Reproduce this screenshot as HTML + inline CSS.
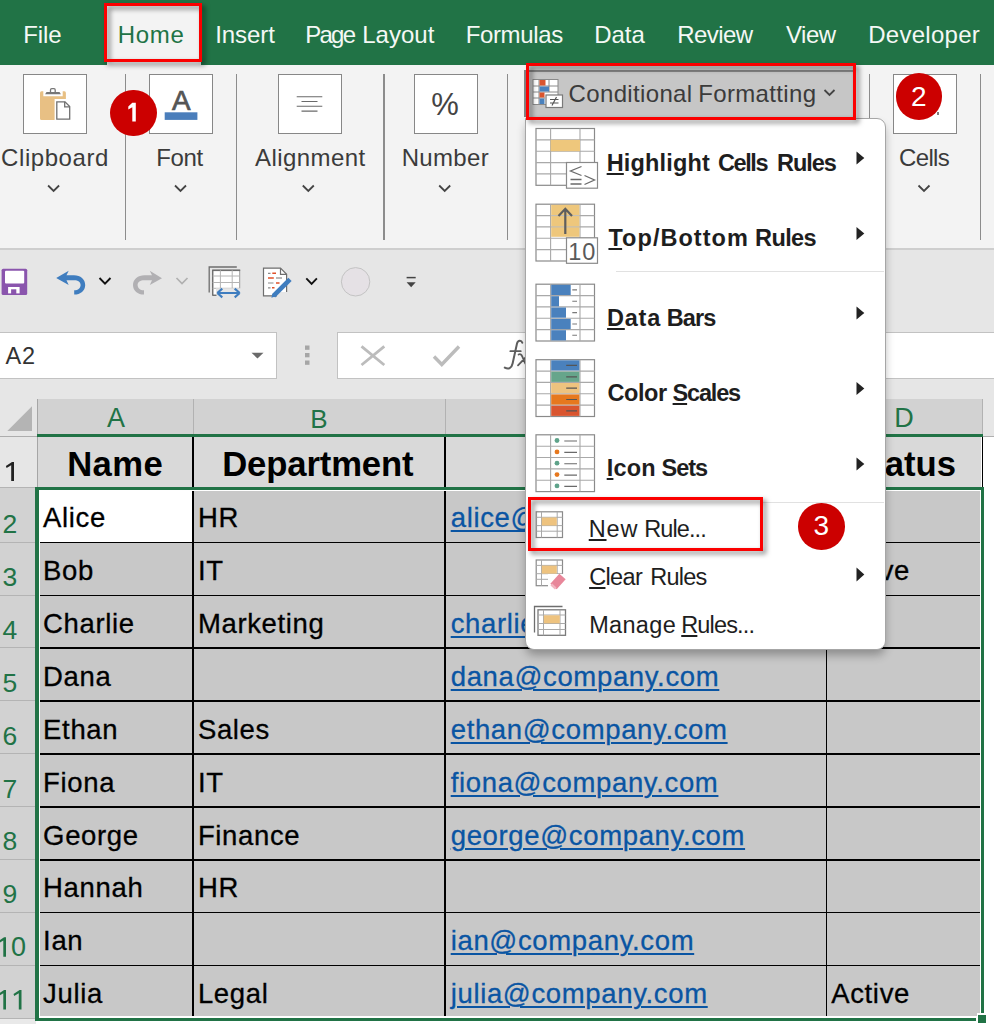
<!DOCTYPE html>
<html><head><meta charset="utf-8"><title>Excel</title>
<style>
*{box-sizing:border-box;margin:0;padding:0}
html,body{width:994px;height:1024px;overflow:hidden;background:#fff}
body{font-family:"Liberation Sans",sans-serif;position:relative;color:#000}
.a{position:absolute}
.t{position:absolute;white-space:nowrap;line-height:normal}
.t u{text-decoration:underline;text-underline-offset:2px;text-decoration-thickness:1.5px}
.ibox{position:absolute;top:74px;width:64px;height:60.3px;background:#fff;border:1.15px solid #878787}
.vsep{position:absolute;top:74px;width:1.3px;height:166px;background:#8c8c8c}
.badge{position:absolute;width:46.6px;height:46.6px;border-radius:50%;background:#cc0000}
.hl{position:absolute;background:#000;height:1.8px;left:40px;width:940px}
.vl{position:absolute;background:#000;width:1.85px;top:437px;height:580px}
.rhl{position:absolute;left:0;width:36px;height:1px;background:#b4b4b4}
svg{position:absolute;overflow:visible}

</style></head><body>
<!-- tab bar -->
<div class="a" style="left:0;top:0;width:994px;height:65px;background:#217346"></div>
<div class="a" style="left:107px;top:5px;width:94px;height:61px;background:#f3f3f3"></div>
<!-- ribbon -->
<div class="a" style="left:0;top:65px;width:994px;height:184px;background:#f3f3f3"></div>
<div class="a" style="left:0;top:248.1px;width:994px;height:1.5px;background:#cecece"></div>
<div class="a" style="left:0;top:249.5px;width:994px;height:150px;background:#e6e6e6"></div>
<!-- icon boxes -->
<div class="ibox" style="left:22.6px"></div>
<div class="ibox" style="left:149px"></div>
<div class="ibox" style="left:278px"></div>
<div class="ibox" style="left:414px"></div>
<div class="ibox" style="left:893px"></div>
<div class="vsep" style="left:125.2px"></div>
<div class="vsep" style="left:235.8px"></div>
<div class="vsep" style="left:383.3px"></div>
<div class="vsep" style="left:506.8px"></div>
<div class="vsep" style="left:869.2px"></div>
<div class="vsep" style="left:979.8px"></div>
<!-- home red box -->
<div class="a" style="left:104.4px;top:3px;width:97.4px;height:59.2px;border:3px solid #fb0000;filter:drop-shadow(3px 3px 2.5px rgba(0,0,0,.5))"></div>
<!-- name box & formula box -->
<div class="a" style="left:-2px;top:332px;width:279.3px;height:46.800px;background:#fff;border:1.3px solid #c2c2c2"></div>
<div class="a" style="left:336.700px;top:332px;width:660px;height:46.800px;background:#fff;border:1.3px solid #c2c2c2"></div>
<!-- GRID -->
<div class="a" style="left:0;top:399px;width:37px;height:38px;background:#e6e6e6"></div>
<div class="a" style="left:37px;top:399px;width:946px;height:36px;background:#d2d2d2"></div>
<div class="a" style="left:0;top:437px;width:37px;height:51px;background:#e6e6e6"></div>
<div class="a" style="left:0;top:488px;width:37px;height:536px;background:#d2d2d2"></div>
<div class="a" style="left:37px;top:399px;width:1px;height:88px;background:#a6a6a6"></div>
<div class="a" style="left:193px;top:399px;width:1px;height:36px;background:#b2b2b2"></div>
<div class="a" style="left:445px;top:399px;width:1px;height:36px;background:#b2b2b2"></div>
<div class="a" style="left:827px;top:399px;width:1px;height:36px;background:#b2b2b2"></div>
<div class="a" style="left:982.3px;top:399px;width:1px;height:36px;background:#b2b2b2"></div>
<svg style="left:0;top:399px" width="37" height="38"><path d="M32 7.200 L32 31.900 L7.300 31.900 Z" fill="#b4b4b4"/></svg>
<div class="a" style="left:0;top:436px;width:37px;height:1px;background:#adadad"></div>
<!-- cells -->
<div class="a" style="left:38px;top:437px;width:944px;height:51px;background:#d9d9d9"></div>
<div class="a" style="left:38px;top:490px;width:942px;height:527px;background:#c8c8c8"></div>
<div class="a" style="left:981.3px;top:437px;width:14px;height:587px;background:#fff"></div>
<div class="a" style="left:983px;top:399px;width:11px;height:38px;background:#e6e6e6;border-bottom:1px solid #b0b0b0"></div>
<div class="a" style="left:0px;top:1021px;width:994px;height:3px;background:#fff"></div>
<div class="a" style="left:0px;top:1019px;width:35.5px;height:5px;background:#e9e9e9"></div>
<div class="a" style="left:40px;top:491px;width:153px;height:51px;background:#fff"></div>
<!-- grid lines -->
<div class="hl" style="top:541.5px"></div>
<div class="hl" style="top:594.5px"></div>
<div class="hl" style="top:647.3px"></div>
<div class="hl" style="top:700px"></div>
<div class="hl" style="top:753px"></div>
<div class="hl" style="top:806px"></div>
<div class="hl" style="top:858.8px"></div>
<div class="hl" style="top:911.7px"></div>
<div class="hl" style="top:964.6px"></div>
<div class="vl" style="left:192.3px"></div>
<div class="vl" style="left:444.2px"></div>
<div class="vl" style="left:825.5px"></div>
<div class="vl" style="left:981.5px;height:50px;width:1.3px"></div>
<!-- row header lines -->
<div class="rhl" style="top:487px"></div>
<div class="rhl" style="top:541.5px"></div>
<div class="rhl" style="top:594.5px"></div>
<div class="rhl" style="top:647.3px"></div>
<div class="rhl" style="top:700px"></div>
<div class="rhl" style="top:753px"></div>
<div class="rhl" style="top:806px"></div>
<div class="rhl" style="top:858.8px"></div>
<div class="rhl" style="top:911.7px"></div>
<div class="rhl" style="top:964.6px"></div>
<div class="rhl" style="top:1017.5px"></div>
<svg style="left:0;top:440px" width="37" height="584" viewBox="0 440 37 584"><path d="M14.0 462.0 V481.0 H11.2 V465.2 L6.6 467.9 L5.9 465.9 L12.0 462.0 Z" fill="#222"/><path d="M6.0 937.3 V956.7 H3.3 V940.5 L-1.3 943.2 L-2.0 941.2 L4.1 937.3 Z " fill="#217346"/><path d="M6.0 990.1 V1009.6 H3.3 V993.3 L-1.3 996.0 L-2.0 994.0 L4.1 990.1 Z M21.5 990.1 V1009.6 H18.8 V993.3 L14.2 996.0 L13.5 994.0 L19.6 990.1 Z" fill="#217346"/></svg>
<!-- green lines -->
<div class="a" style="left:37px;top:434px;width:946px;height:3px;background:#217346"></div>
<div class="a" style="left:35.2px;top:487px;width:948.8px;height:3px;background:#217346"></div>
<div class="a" style="left:35.2px;top:487px;width:3.4px;height:534px;background:#217346"></div>
<div class="a" style="left:981px;top:487px;width:3px;height:527px;background:#217346"></div>
<div class="a" style="left:35.2px;top:1017.7px;width:941.3px;height:3.3px;background:#217346"></div>
<div class="a" style="left:38.5px;top:490px;width:1.5px;height:527px;background:#fff"></div>
<div class="a" style="left:38.5px;top:490px;width:942px;height:1.2px;background:#fff"></div>
<div class="a" style="left:979.6px;top:490px;width:1.6px;height:524px;background:#fff"></div>
<div class="a" style="left:38.5px;top:1015.8px;width:938px;height:2px;background:#fff"></div>
<div class="a" style="left:976.5px;top:1013px;width:11px;height:11px;background:#fff"></div>
<div class="a" style="left:978px;top:1014.5px;width:8px;height:8px;background:#217346"></div>
<!-- RIBBON ICONS -->
<svg style="left:0;top:0" width="994" height="260" viewBox="0 0 994 260">
 <!-- clipboard -->
 <path d="M40 93 Q40 91.300 41.500 91.300 H43.300 V96.200 H62.700 V91.300 H64.500 Q65.900 91.300 65.900 93 V99 H54.600 V119.900 H41.500 Q40 119.900 40 118.400 Z" fill="#e8c084"/>
 <path d="M45.100 94.200 L46.500 92 H59.500 L60.900 94.200 Z" fill="#777"/>
 <path d="M50.500 92 V89.900 Q50.500 88.700 51.800 88.700 H54 Q55.200 88.700 55.200 89.900 V92" fill="none" stroke="#777" stroke-width="1.300"/>
 <path d="M56.800 101.800 H65 L69.700 106.500 V119.100 H56.800 Z" fill="#fff" stroke="#707070" stroke-width="1.300"/>
 <path d="M64.700 101.800 V106.800 H69.700" fill="none" stroke="#707070" stroke-width="1.300"/>
 <!-- font A -->
 <rect x="164.7" y="112.3" width="32.7" height="7.6" fill="#4a7ebb"/>
 <!-- alignment -->
 <g stroke="#6a6a6a" stroke-width="1.1">
  <path d="M296.7 96.7 H322.3 M301.5 101.5 H317.5 M296.7 106.3 H322.3 M301.5 111.1 H317.5"/>
 </g>
 <!-- chevrons -->
 <g fill="none" stroke="#444" stroke-width="1.8">
  <path d="M48.1 185.5 L53.6 191 L59.1 185.5"/>
  <path d="M175 185.5 L180.5 191 L186 185.5"/>
  <path d="M302.8 185.5 L308.3 191 L313.8 185.5"/>
  <path d="M439.2 185.5 L444.7 191 L450.2 185.5"/>
  <path d="M918.5 185.5 L924 191 L929.5 185.5"/>
 </g>
</svg>
<!-- CF BUTTON -->
<div class="a" style="left:528px;top:65px;width:327px;height:53px;background:#c6c6c6;border-top:5px solid #d0d2d2"></div>
<div class="a" style="left:524.2px;top:70.3px;width:331px;height:1.5px;background:#858585"></div>
<div class="a" style="left:524.2px;top:70.3px;width:1.6px;height:47px;background:#858585"></div>
<svg style="left:0;top:0" width="994" height="130" viewBox="0 0 994 130">
 <!-- CF icon -->
 <rect x="533" y="79.5" width="25" height="25" fill="#fff" stroke="#8a8a8a" stroke-width="1"/>
 <path d="M539 79.5 V104.5 M549 79.5 V92 M533 86 H558 M533 92 H558 M533 98 H545" stroke="#8a8a8a" stroke-width="1" fill="none"/>
 <rect x="539.5" y="80" width="6" height="5.5" fill="#d9552f"/>
 <rect x="539.5" y="86.5" width="9.5" height="5" fill="#4a81bd"/>
 <rect x="539.5" y="92.500" width="5" height="5" fill="#d9552f"/>
 <rect x="539.5" y="98.500" width="5" height="5.5" fill="#4a81bd"/>
 <rect x="546" y="95" width="16.5" height="12.5" fill="#fff" stroke="#7a7a7a" stroke-width="1.2"/>
 <path d="M550 99.5 H558.500 M550 103 H558.500 M556.500 97 L552 105.500" stroke="#555" stroke-width="1.2" fill="none"/>
 <!-- CF chevron -->
 <path d="M824.500 90 L829.500 95 L834.500 90" fill="none" stroke="#444" stroke-width="1.8"/>
</svg>
<svg style="left:495px;top:335px" width="40" height="40" viewBox="495 335 40 40"><g fill="none" stroke="#5e5e5e" stroke-linecap="round"><path d="M522.300 342.700 C521.500 340.200 518 339.900 517 343.500 L512.600 363.500 C511.600 368.300 508.300 369.700 504.800 367.600" stroke-width="2"/><path d="M510.300 351.200 H520.800" stroke-width="1.700"/><path d="M518.600 354.500 C520.500 353.500 521.500 354.500 522.500 357 L525 363 C526 365.500 527.500 365.500 529 364.500 M528.500 354.500 L518 365.300" stroke-width="1.800"/></g></svg>
<span class="t" style="left:23.20px;top:20.68px;font-size:24px;color:#f4f8f5;letter-spacing:-0.120px;">File</span>
<span class="t" style="left:117.70px;top:20.68px;font-size:24px;color:#217346;letter-spacing:0.720px;">Home</span>
<span class="t" style="left:215.20px;top:20.68px;font-size:24px;color:#f4f8f5;letter-spacing:-0.072px;">Insert</span>
<span class="t" style="left:305.16px;top:20.68px;font-size:24px;color:#f4f8f5;letter-spacing:-1.740px;">Page</span>
<span class="t" style="left:362.20px;top:20.68px;font-size:24px;color:#f4f8f5;letter-spacing:0.036px;">Layout</span>
<span class="t" style="left:465.70px;top:20.68px;font-size:24px;color:#f4f8f5;letter-spacing:-0.360px;">Formulas</span>
<span class="t" style="left:594.20px;top:20.68px;font-size:24px;color:#f4f8f5;">Data</span>
<span class="t" style="left:677.20px;top:20.68px;font-size:24px;color:#f4f8f5;letter-spacing:-0.540px;">Review</span>
<span class="t" style="left:786.00px;top:20.68px;font-size:24px;color:#f4f8f5;letter-spacing:-0.480px;">View</span>
<span class="t" style="left:868.22px;top:20.68px;font-size:24px;color:#f4f8f5;letter-spacing:0.270px;">Developer</span>
<span class="t" style="left:1.10px;top:143.58px;font-size:24px;color:#3b3b3b;letter-spacing:0.562px;">Clipboard</span>
<span class="t" style="left:156.20px;top:143.58px;font-size:24px;color:#3b3b3b;letter-spacing:-0.360px;">Font</span>
<span class="t" style="left:255.00px;top:143.58px;font-size:24px;color:#3b3b3b;letter-spacing:0.427px;">Alignment</span>
<span class="t" style="left:401.70px;top:143.58px;font-size:24px;color:#3b3b3b;letter-spacing:0.324px;">Number</span>
<span class="t" style="left:899.10px;top:143.58px;font-size:24px;color:#3b3b3b;letter-spacing:-0.675px;">Cells</span>
<span class="t" style="left:171.98px;top:84.58px;font-size:27.8px;color:#555;-webkit-text-stroke:0.7px #555;">A</span>
<span class="t" style="left:431.16px;top:87.43px;font-size:31px;color:#444;">%</span>
<span class="t" style="left:568.62px;top:79.78px;font-size:24px;color:#3b3b3b;letter-spacing:0.342px;">Conditional</span>
<span class="t" style="left:698.24px;top:79.78px;font-size:24px;color:#3b3b3b;letter-spacing:0.340px;">Formatting</span>
<span class="t" style="left:5.50px;top:342.84px;font-size:23.5px;color:#333;letter-spacing:0.900px;">A2</span>
<span class="t" style="left:107.04px;top:402.72px;font-size:27px;color:#217346;">A</span>
<span class="t" style="left:310.24px;top:403.64px;font-size:26px;color:#217346;">B</span>
<span class="t" style="left:894.20px;top:402.72px;font-size:27px;color:#217346;">D</span>
<span class="t" style="left:2.58px;top:509.38px;font-size:26.5px;color:#217346;">2</span>
<span class="t" style="left:2.58px;top:562.18px;font-size:26.5px;color:#217346;">3</span>
<span class="t" style="left:2.58px;top:615.08px;font-size:26.5px;color:#217346;">4</span>
<span class="t" style="left:2.58px;top:667.88px;font-size:26.5px;color:#217346;">5</span>
<span class="t" style="left:2.58px;top:720.78px;font-size:26.5px;color:#217346;">6</span>
<span class="t" style="left:2.58px;top:773.58px;font-size:26.5px;color:#217346;">7</span>
<span class="t" style="left:2.58px;top:826.48px;font-size:26.5px;color:#217346;">8</span>
<span class="t" style="left:2.58px;top:879.38px;font-size:26.5px;color:#217346;">9</span>
<span class="t" style="left:11.06px;top:931.72px;font-size:27px;color:#217346;">0</span>
<span class="t" style="left:67.20px;top:445.05px;font-size:34.67px;color:#000;font-weight:bold;letter-spacing:0.360px;">Name</span>
<span class="t" style="left:222.22px;top:445.05px;font-size:34.67px;color:#000;font-weight:bold;letter-spacing:-0.140px;">Department</span>
<span class="t" style="left:850.10px;top:445.05px;font-size:34.67px;color:#000;font-weight:bold;">Status</span>
<span class="t" style="left:43.10px;top:502.46px;font-size:27.5px;color:#000;letter-spacing:0.65px;-webkit-text-stroke:0.3px;">Alice</span>
<span class="t" style="left:197.90px;top:502.46px;font-size:27.5px;color:#000;letter-spacing:0.65px;-webkit-text-stroke:0.3px;">HR</span>
<span class="t" style="left:450.70px;top:502.46px;font-size:27.5px;color:#0a55a3;letter-spacing:0.65px;-webkit-text-stroke:0.3px;text-decoration:underline;text-decoration-thickness:2px;text-underline-offset:3px;">alice@company.com</span>
<span class="t" style="left:43.10px;top:555.31px;font-size:27.5px;color:#000;letter-spacing:0.65px;-webkit-text-stroke:0.3px;">Bob</span>
<span class="t" style="left:197.90px;top:555.31px;font-size:27.5px;color:#000;letter-spacing:0.65px;-webkit-text-stroke:0.3px;">IT</span>
<span class="t" style="left:831.20px;top:555.31px;font-size:27.5px;color:#000;letter-spacing:0.65px;-webkit-text-stroke:0.3px;">Active</span>
<span class="t" style="left:43.10px;top:608.16px;font-size:27.5px;color:#000;letter-spacing:0.65px;-webkit-text-stroke:0.3px;">Charlie</span>
<span class="t" style="left:197.90px;top:608.16px;font-size:27.5px;color:#000;letter-spacing:0.65px;-webkit-text-stroke:0.3px;">Marketing</span>
<span class="t" style="left:450.70px;top:608.16px;font-size:27.5px;color:#0a55a3;letter-spacing:0.65px;-webkit-text-stroke:0.3px;text-decoration:underline;text-decoration-thickness:2px;text-underline-offset:3px;">charlie@company.com</span>
<span class="t" style="left:43.10px;top:661.01px;font-size:27.5px;color:#000;letter-spacing:0.65px;-webkit-text-stroke:0.3px;">Dana</span>
<span class="t" style="left:450.70px;top:661.01px;font-size:27.5px;color:#0a55a3;letter-spacing:0.65px;-webkit-text-stroke:0.3px;text-decoration:underline;text-decoration-thickness:2px;text-underline-offset:3px;">dana@company.com</span>
<span class="t" style="left:43.10px;top:713.86px;font-size:27.5px;color:#000;letter-spacing:0.65px;-webkit-text-stroke:0.3px;">Ethan</span>
<span class="t" style="left:197.90px;top:713.86px;font-size:27.5px;color:#000;letter-spacing:0.65px;-webkit-text-stroke:0.3px;">Sales</span>
<span class="t" style="left:450.70px;top:713.86px;font-size:27.5px;color:#0a55a3;letter-spacing:0.65px;-webkit-text-stroke:0.3px;text-decoration:underline;text-decoration-thickness:2px;text-underline-offset:3px;">ethan@company.com</span>
<span class="t" style="left:43.10px;top:766.71px;font-size:27.5px;color:#000;letter-spacing:0.65px;-webkit-text-stroke:0.3px;">Fiona</span>
<span class="t" style="left:197.90px;top:766.71px;font-size:27.5px;color:#000;letter-spacing:0.65px;-webkit-text-stroke:0.3px;">IT</span>
<span class="t" style="left:450.70px;top:766.71px;font-size:27.5px;color:#0a55a3;letter-spacing:0.65px;-webkit-text-stroke:0.3px;text-decoration:underline;text-decoration-thickness:2px;text-underline-offset:3px;">fiona@company.com</span>
<span class="t" style="left:43.10px;top:819.56px;font-size:27.5px;color:#000;letter-spacing:0.65px;-webkit-text-stroke:0.3px;">George</span>
<span class="t" style="left:197.90px;top:819.56px;font-size:27.5px;color:#000;letter-spacing:0.65px;-webkit-text-stroke:0.3px;">Finance</span>
<span class="t" style="left:450.70px;top:819.56px;font-size:27.5px;color:#0a55a3;letter-spacing:0.65px;-webkit-text-stroke:0.3px;text-decoration:underline;text-decoration-thickness:2px;text-underline-offset:3px;">george@company.com</span>
<span class="t" style="left:43.10px;top:872.41px;font-size:27.5px;color:#000;letter-spacing:0.65px;-webkit-text-stroke:0.3px;">Hannah</span>
<span class="t" style="left:197.90px;top:872.41px;font-size:27.5px;color:#000;letter-spacing:0.65px;-webkit-text-stroke:0.3px;">HR</span>
<span class="t" style="left:43.10px;top:925.26px;font-size:27.5px;color:#000;letter-spacing:0.65px;-webkit-text-stroke:0.3px;">Ian</span>
<span class="t" style="left:450.70px;top:925.26px;font-size:27.5px;color:#0a55a3;letter-spacing:0.65px;-webkit-text-stroke:0.3px;text-decoration:underline;text-decoration-thickness:2px;text-underline-offset:3px;">ian@company.com</span>
<span class="t" style="left:43.10px;top:978.11px;font-size:27.5px;color:#000;letter-spacing:0.65px;-webkit-text-stroke:0.3px;">Julia</span>
<span class="t" style="left:197.90px;top:978.11px;font-size:27.5px;color:#000;letter-spacing:0.65px;-webkit-text-stroke:0.3px;">Legal</span>
<span class="t" style="left:450.70px;top:978.11px;font-size:27.5px;color:#0a55a3;letter-spacing:0.65px;-webkit-text-stroke:0.3px;text-decoration:underline;text-decoration-thickness:2px;text-underline-offset:3px;">julia@company.com</span>
<span class="t" style="left:831.20px;top:978.11px;font-size:27.5px;color:#000;letter-spacing:0.65px;-webkit-text-stroke:0.3px;">Active</span>
<!-- MENU -->
<div class="a" style="left:525px;top:117.5px;width:361px;height:532px;background:#fff;border:1.5px solid #a6a6a6;border-radius:0 9px 9px 9px;box-shadow:0 6px 10px -1px rgba(0,0,0,.3)"></div>
<div class="a" style="left:616px;top:271px;width:268px;height:1px;background:#e1e1e1"></div>
<div class="a" style="left:763px;top:502px;width:121px;height:1px;background:#e1e1e1"></div>
<svg style="left:520px;top:120px" width="370" height="530" viewBox="520 120 370 530">

<!-- highlight cells -->
<g transform="translate(0,128)"><rect x="536" y="0.5" width="58.5" height="56.8" fill="#fff" stroke="#8a8a8a" stroke-width="1.2"/>
  <path d="M550.6 0.5 V57.3 M580 0.5 V57.3 M536 11.9 H594.5 M536 23.200 H594.5 M536 34.600 H594.5 M536 45.900 H594.5" stroke="#a9a9a9" stroke-width="1.1" fill="none"/></g>
<rect x="550.6" y="139.900" width="29.4" height="11.300" fill="#eec77c"/>
<rect x="566.500" y="162.500" width="31" height="25.700" fill="#fff" stroke="#8a8a8a" stroke-width="1.2"/>
<path d="M581.500 166.500 L570.500 171 L581.500 175.500 M570.500 179.500 H581.500 M570.500 184 H581.500 M584.500 175.500 L594.500 180 L584.500 184.500" stroke="#6a6a6a" stroke-width="1.3" fill="none"/>
<!-- top/bottom -->
<g transform="translate(0,203.700)"><rect x="536" y="0.5" width="58.5" height="56.8" fill="#fff" stroke="#8a8a8a" stroke-width="1.2"/>
  <path d="M550.6 0.5 V57.3 M580 0.5 V57.3 M536 11.9 H594.5 M536 23.200 H594.5 M536 34.600 H594.5 M536 45.900 H594.5" stroke="#a9a9a9" stroke-width="1.1" fill="none"/></g>
<rect x="551.200" y="204.800" width="28.200" height="32" fill="#eec77c"/>
<path d="M551.200 215.600 H579.400 M551.200 226.900 H579.400" stroke="#bdbdbd" stroke-width="1"/>
<path d="M565.300 208.500 V234 M558.500 216 L565.300 208.800 L572 216" stroke="#5e5e5e" stroke-width="2.200" fill="none"/>
<rect x="566.500" y="237.800" width="31" height="25.500" fill="#fff" stroke="#8a8a8a" stroke-width="1.2"/>
<!-- data bars -->
<g transform="translate(0,283.700)"><rect x="536" y="0.5" width="58.5" height="56.8" fill="#fff" stroke="#8a8a8a" stroke-width="1.2"/>
  <path d="M550.6 0.5 V57.3 M580 0.5 V57.3 M536 11.9 H594.5 M536 23.200 H594.5 M536 34.600 H594.5 M536 45.900 H594.5" stroke="#a9a9a9" stroke-width="1.1" fill="none"/></g>
<g fill="#4a81bd">
 <rect x="551.200" y="284.800" width="19.500" height="10.200"/>
 <rect x="551.200" y="296.200" width="7.800" height="10.200"/>
 <rect x="551.200" y="307.500" width="14.800" height="10.200"/>
 <rect x="551.200" y="318.900" width="19.500" height="10.200"/>
 <rect x="551.200" y="330.200" width="14.800" height="10.200"/>
</g>
<path d="M572.300 289.900 H577 M572.300 301.300 H577 M572.300 312.600 H577 M572.300 324 H577 M572.300 335.300 H577" stroke="#7a7a7a" stroke-width="1.100"/>
<!-- color scales -->
<g transform="translate(0,359.200)"><rect x="536" y="0.5" width="58.5" height="56.8" fill="#fff" stroke="#8a8a8a" stroke-width="1.2"/>
  <path d="M550.6 0.5 V57.3 M580 0.5 V57.3 M536 11.9 H594.5 M536 23.200 H594.5 M536 34.600 H594.5 M536 45.900 H594.5" stroke="#a9a9a9" stroke-width="1.1" fill="none"/></g>
<rect x="551.200" y="360.300" width="28.200" height="10.200" fill="#4a81bd"/>
<rect x="551.200" y="371.700" width="28.200" height="10.200" fill="#66a58b"/>
<rect x="551.200" y="383" width="28.200" height="10.200" fill="#eec37f"/>
<rect x="551.200" y="394.400" width="28.200" height="10.200" fill="#e6781e"/>
<rect x="551.200" y="405.700" width="28.200" height="10.200" fill="#d9552f"/>
<path d="M566.200 365.400 H577 M566.200 376.800 H577 M566.200 388.100 H577 M566.200 399.500 H577 M566.200 410.800 H577" stroke="#555" stroke-width="1.200"/>
<!-- icon sets -->
<g transform="translate(0,434.300)"><rect x="536" y="0.5" width="58.5" height="56.8" fill="#fff" stroke="#8a8a8a" stroke-width="1.2"/>
  <path d="M550.6 0.5 V57.3 M580 0.5 V57.3 M536 11.9 H594.5 M536 23.200 H594.5 M536 34.600 H594.5 M536 45.900 H594.5" stroke="#a9a9a9" stroke-width="1.1" fill="none"/></g>
<g fill="#5fa38a"><circle cx="557" cy="440.500" r="2.400"/><circle cx="557" cy="463.200" r="2.400"/><circle cx="557" cy="485.900" r="2.400"/></g>
<g fill="#e6781e"><circle cx="557" cy="451.900" r="2.400"/><circle cx="557" cy="474.600" r="2.400"/></g>
<path d="M564.300 441 H577 M564.300 452.400 H577 M564.300 463.700 H577 M564.300 475.100 H577 M564.300 486.400 H577" stroke="#6a6a6a" stroke-width="1.100"/>
<!-- arrows -->
<g fill="#222">
 <path d="M856.500 151.500 L864.300 158 L856.500 164.500 Z"/>
 <path d="M856.500 227 L864.300 233.500 L856.500 240 Z"/>
 <path d="M856.500 306.500 L864.300 313 L856.500 319.500 Z"/>
 <path d="M856.500 382 L864.300 388.500 L856.500 395 Z"/>
 <path d="M856.500 457.500 L864.300 464 L856.500 470.500 Z"/>
 <path d="M856.500 567.500 L864.300 574.500 L856.500 581.500 Z"/>
</g>
<!-- new rule icon -->
<g id="nr">
 <rect x="536.200" y="511.800" width="26.300" height="25.700" fill="#fff" stroke="#8a8a8a" stroke-width="1.200"/>
 <path d="M541.500 511.800 V537.500 M557.200 511.800 V537.500 M536.200 517.300 H562.500 M536.200 525.600 H562.500 M536.200 531.200 H562.500" stroke="#a9a9a9" stroke-width="1" />
 <rect x="541.800" y="517.500" width="15" height="8" fill="#eec37f"/>
</g>
<!-- clear rules icon -->
<rect x="536.200" y="560" width="26.300" height="25.700" fill="#fff" stroke="#8a8a8a" stroke-width="1.200"/>
<path d="M541.500 560 V585.700 M557.200 560 V585.700 M536.200 565.400 H562.500 M536.200 573.700 H562.500 M536.200 579.300 H562.500" stroke="#a9a9a9" stroke-width="1" />
<rect x="541.800" y="565.600" width="15" height="8" fill="#eec37f"/>
<rect x="548" y="574" width="20" height="15" fill="#fff"/>
<path d="M553.500 586.500 L562.500 576.500" stroke="#e8879a" stroke-width="8.500" stroke-linecap="butt"/>
<path d="M551.300 584.500 L555.800 588.700" stroke="#f2b6c1" stroke-width="2.500"/>
<!-- manage rules icon -->
<path d="M562.500 606.500 H534.500 V632.500" fill="none" stroke="#6e6e6e" stroke-width="1.300"/>
<rect x="538" y="609.800" width="27.500" height="25.500" fill="#fff" stroke="#7a7a7a" stroke-width="1.300"/>
<path d="M543.500 609.800 V635.300 M560 609.800 V635.300 M538 615 H565.500 M538 623.500 H565.500 M538 629.500 H565.500" stroke="#a9a9a9" stroke-width="1" />
<rect x="543.800" y="615.300" width="16" height="8" fill="#eec37f"/>
</svg>
<!-- CF red box -->
<div class="a" style="left:526px;top:62.5px;width:330.3px;height:57.4px;border:3.4px solid #fb0000;filter:drop-shadow(3px 3px 2.5px rgba(0,0,0,.5))"></div>
<!-- QAT + formula bar icons -->
<svg style="left:0;top:250px" width="540" height="150" viewBox="0 250 540 150">
 <!-- save -->
 <rect x="1.6" y="268.7" width="25.6" height="26.2" rx="1.5" fill="#8a55ad"/>
 <rect x="5" y="270.7" width="19.2" height="12.8" rx="1" fill="#fff"/>
 <rect x="8.1" y="287" width="11.5" height="6.4" fill="#fff"/>
 <rect x="11.1" y="289.3" width="5.2" height="5" fill="#8a55ad"/>
 <!-- undo -->
 <path d="M56.2 277.9 L68.7 270.8 L66.5 275.3 L74 275.3 C80.5 275.3 85.2 279.3 85.2 285 C85.2 290.8 80.5 294.6 74.2 294.6 L74.2 290.3 C78.3 290.3 80.6 288 80.6 285 C80.6 282 78.3 280.2 74 280.2 L66.5 280.2 L68.7 285 Z" fill="#3f7dbf"/>
 <path d="M99.500 278 L105 283.600 L110.500 278" fill="none" stroke="#111" stroke-width="1.9"/>
 <!-- redo -->
 <path d="M162 278.200 L149.800 270.800 L152 275.300 L144.500 275.300 C138 275.300 133 279.300 133 285 C133 290.800 137.700 294.600 144 294.600 L144 290.300 C140 290.300 137.600 288 137.600 285 C137.600 282 140 280.200 144.500 280.200 L152 280.200 L149.800 285 Z" fill="#b1b0b3"/>
 <path d="M176.500 278 L182 283.600 L187.500 278" fill="none" stroke="#b0b0b0" stroke-width="1.7"/>
 <!-- table w/ arrow -->
 <path d="M236.800 267 H209.200 V292.500" fill="none" stroke="#6e6e6e" stroke-width="1.3"/>
 <rect x="212.700" y="270.300" width="27" height="25" fill="#fff" stroke="#9a9a9a" stroke-width="1"/>
 <path d="M212.200 270.300 H240.200" stroke="#6e6e6e" stroke-width="1.6"/>
 <path d="M212.700 270 V295.500" stroke="#6e6e6e" stroke-width="1.3"/>
 <path d="M220.400 270.300 V295 M232.200 270.300 V295 M212.700 276 H239.700 M212.700 282.500 H239.700 M212.700 288.300 H239.700" stroke="#b4b4b4" stroke-width="1"/>
 <rect x="216" y="288.300" width="25" height="9.500" fill="#e6e6e6"/>
 <path d="M212.700 295.300 H216.500" stroke="#6e6e6e" stroke-width="1.3"/>
 <path d="M217.300 293 L222.300 288.600 M217.300 293 L222.300 297.400 M239.700 293 L234.700 288.600 M239.700 293 L234.700 297.400 M218 293 H239" stroke="#3f7dbf" stroke-width="2.1" fill="none"/>
 <!-- doc with pen -->
 <path d="M263.500 268.200 H280.500 L286.600 274.300 V295.800 H263.500 Z" fill="#fff" stroke="#6e6e6e" stroke-width="1.2"/>
 <path d="M280.500 268.200 V274.300 H286.600" fill="none" stroke="#6e6e6e" stroke-width="1.2"/>
 <path d="M268 273.300 H270.500 M268 283 H273.500 M268 287.800 H270.500" stroke="#8a8a8a" stroke-width="1.2"/>
 <path d="M272.300 273.300 H276 M268 278 H273.800 M276 283 H279.500 M272 287.800 H274.500" stroke="#e0502a" stroke-width="1.6"/>
 <path d="M276 278 H282" stroke="#8a8a8a" stroke-width="1.2"/>
 <rect x="277" y="292" width="11" height="6" fill="#e6e6e6"/>
 <path d="M290 279.300 L273.500 295.800" stroke="#3f7dbf" stroke-width="4.600"/>
 <path d="M271.300 297.800 L272.600 293.700 L275.400 296.500 Z" fill="#3f7dbf"/>
 <path d="M306.300 278.400 L311.600 283.800 L316.900 278.400" fill="none" stroke="#111" stroke-width="1.9"/>
 <circle cx="355.600" cy="281.800" r="14.200" fill="#e5e1e5" stroke="#c3c3c3" stroke-width="1"/>
 <path d="M406.600 277.600 H415.700" stroke="#444" stroke-width="1.500"/>
 <path d="M406.600 282.200 H415.700 L411.150 287.200 Z" fill="#444"/>
 <!-- name box dropdown -->
 <path d="M251.500 352.800 H263.500 L257.500 358.400 Z" fill="#6a6a6a"/>
 <rect x="305" y="345.500" width="4.500" height="4.300" fill="#a6a6a6"/>
 <rect x="305" y="353" width="4.500" height="4.300" fill="#a6a6a6"/>
 <rect x="305" y="360.500" width="4.500" height="4.300" fill="#a6a6a6"/>
 <path d="M361.500 346.300 L384.300 365 M384.300 346.300 L361.500 365" stroke="#bcbcbc" stroke-width="2.800" fill="none"/>
 <path d="M434 356.500 L441.800 364.500 L459 346.500" stroke="#bcbcbc" stroke-width="3.400" fill="none"/>
</svg>
<!-- New rule red box -->
<div class="a" style="left:527.7px;top:496.8px;width:235.3px;height:54.5px;border:3.3px solid #fb0000;filter:drop-shadow(3px 3px 2.5px rgba(0,0,0,.5))"></div>
<!-- badges -->
<div class="badge" style="left:110.4px;top:89.5px"></div>
<svg style="left:0;top:0" width="200" height="140"><path d="M132.300 102.700 H135.800 V121.600 H132.300 V107.200 L128.300 109.600 V106.400 Z" fill="#fff"/></svg>
<div class="a" style="left:936.7px;top:112.4px;width:2.6px;height:2.6px;background:#7c7c7c"></div>
<div class="badge" style="left:895.8px;top:73.300px"></div>
<div class="badge" style="left:798.300px;top:503px"></div>

<span class="t" style="left:606.66px;top:150.34px;font-size:23.5px;color:#1e1e1e;font-weight:bold;letter-spacing:0.180px;"><u>H</u>ighlight</span>
<span class="t" style="left:718.10px;top:150.34px;font-size:23.5px;color:#1e1e1e;font-weight:bold;letter-spacing:-1.440px;">Cells</span>
<span class="t" style="left:777.10px;top:150.34px;font-size:23.5px;color:#1e1e1e;font-weight:bold;letter-spacing:-1.080px;">Rules</span>
<span class="t" style="left:608.46px;top:225.34px;font-size:23.5px;color:#1e1e1e;font-weight:bold;letter-spacing:1.040px;"><u>T</u>op/Bottom</span>
<span class="t" style="left:755.12px;top:225.34px;font-size:23.5px;color:#1e1e1e;font-weight:bold;letter-spacing:-0.630px;">Rules</span>
<span class="t" style="left:607.10px;top:304.74px;font-size:23.5px;color:#1e1e1e;font-weight:bold;letter-spacing:0.720px;"><u>D</u>ata</span>
<span class="t" style="left:666.68px;top:304.74px;font-size:23.5px;color:#1e1e1e;font-weight:bold;letter-spacing:-0.900px;">Bars</span>
<span class="t" style="left:607.60px;top:380.14px;font-size:23.5px;color:#1e1e1e;font-weight:bold;letter-spacing:-0.450px;">Color</span>
<span class="t" style="left:672.62px;top:380.14px;font-size:23.5px;color:#1e1e1e;font-weight:bold;letter-spacing:-1.188px;"><u>S</u>cales</span>
<span class="t" style="left:606.70px;top:455.34px;font-size:23.5px;color:#1e1e1e;font-weight:bold;letter-spacing:0.180px;"><u>I</u>con</span>
<span class="t" style="left:661.58px;top:455.34px;font-size:23.5px;color:#1e1e1e;font-weight:bold;letter-spacing:-1.020px;">Sets</span>
<span class="t" style="left:588.74px;top:515.54px;font-size:23.5px;color:#1e1e1e;letter-spacing:0.810px;"><u>N</u>ew</span>
<span class="t" style="left:644.20px;top:515.54px;font-size:23.5px;color:#1e1e1e;letter-spacing:-0.900px;">Rule...</span>
<span class="t" style="left:589.14px;top:563.74px;font-size:23.5px;color:#1e1e1e;letter-spacing:-0.630px;"><u>C</u>lear</span>
<span class="t" style="left:650.18px;top:563.74px;font-size:23.5px;color:#1e1e1e;letter-spacing:-0.765px;">Rules</span>
<span class="t" style="left:589.18px;top:612.04px;font-size:23.5px;color:#1e1e1e;letter-spacing:0.324px;">Manage</span>
<span class="t" style="left:681.24px;top:612.04px;font-size:23.5px;color:#1e1e1e;letter-spacing:-0.849px;"><u>R</u>ules...</span>
<span class="t" style="left:568.20px;top:238.84px;font-size:23.5px;color:#5a5a5a;letter-spacing:0.900px;">10</span>
<span class="t" style="left:911.12px;top:80.50px;font-size:28px;color:#fff;">2</span>
<span class="t" style="left:813.62px;top:509.80px;font-size:28px;color:#fff;">3</span>
</body></html>
